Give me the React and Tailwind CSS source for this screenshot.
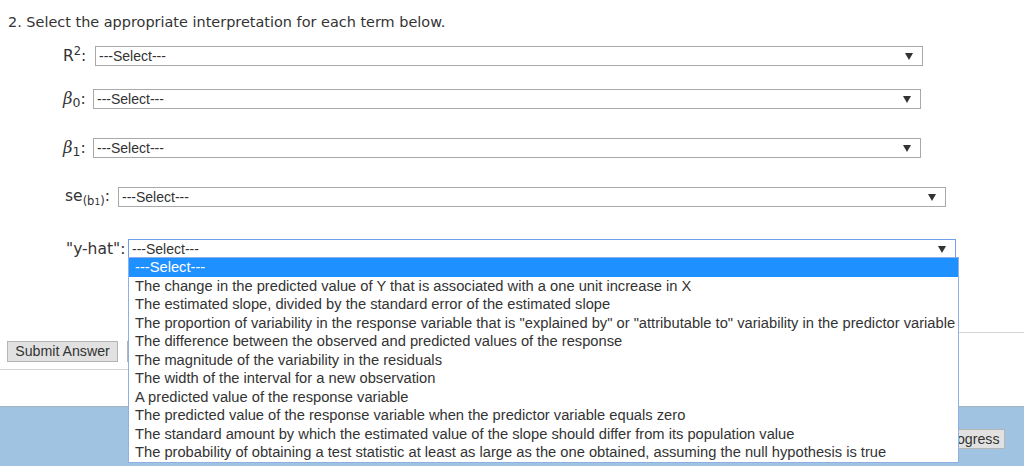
import React from "react";

function Arrow() {
  return (
    <svg width="8" height="7" viewBox="0 0 8 7" className="absolute right-[9px] top-[6px]">
      <path d="M0 0 L8 0 L4 7 Z" fill="#333" />
    </svg>
  );
}

function Select({ focused }) {
  return (
    <div
      className={
        "relative h-[20px] w-[828px] shrink-0 bg-white border font-['Liberation_Sans'] text-[14px] leading-[18px] pl-[3px] text-[#333] " +
        (focused ? "border-[#6f9fe6]" : "border-[#a9a9a9]")
      }
    >
      ---Select---
      <Arrow />
    </div>
  );
}

const options = [
  "The change in the predicted value of Y that is associated with a one unit increase in X",
  "The estimated slope, divided by the standard error of the estimated slope",
  'The proportion of variability in the response variable that is "explained by" or "attributable to" variability in the predictor variable',
  "The difference between the observed and predicted values of the response",
  "The magnitude of the variability in the residuals",
  "The width of the interval for a new observation",
  "A predicted value of the response variable",
  "The predicted value of the response variable when the predictor variable equals zero",
  "The standard amount by which the estimated value of the slope should differ from its population value",
  "The probability of obtaining a test statistic at least as large as the one obtained, assuming the null hypothesis is true",
];

function Beta({ sub }) {
  return (
    <span className="inline-flex items-baseline">
      <span className="font-['DejaVu_Serif'] italic text-[16.5px]">β</span>
      <span className="text-[12.5px] translate-y-[3px]">{sub}</span>
    </span>
  );
}

function Row({ mt, pl, lw, label, focused }) {
  return (
    <div className={`flex h-[20px] items-center text-[15.5px] leading-[20px] ${mt} ${pl}`}>
      <span className={`shrink-0 inline-flex items-baseline whitespace-nowrap ${lw}`}>{label}</span>
      <Select focused={focused} />
    </div>
  );
}

export default function App() {
  return (
    <div className="relative w-[1024px] h-[466px] overflow-hidden bg-white font-['DejaVu_Sans'] text-[#333]">
      <div className="h-[30px] pl-[8px] pt-[13px] text-[14.45px] leading-[18px]">
        2. Select the appropriate interpretation for each term below.
      </div>

      <Row
        mt="mt-[16px]"
        pl="pl-[63px]"
        lw="w-[32px]"
        label={
          <>
            R<span className="text-[11.5px] -translate-y-[6px]">2</span>:
          </>
        }
      />
      <Row
        mt="mt-[23px]"
        pl="pl-[63px]"
        lw="w-[30px]"
        label={
          <>
            <Beta sub="0" />:
          </>
        }
      />
      <Row
        mt="mt-[29px]"
        pl="pl-[63px]"
        lw="w-[30px]"
        label={
          <>
            <Beta sub="1" />:
          </>
        }
      />
      <Row
        mt="mt-[29px]"
        pl="pl-[65px]"
        lw="w-[53px]"
        label={
          <>
            se
            <span className="text-[11.5px] translate-y-[4px]">
              (b<span className="text-[9px]">1</span>)
            </span>
            :
          </>
        }
      />
      <Row mt="mt-[32px]" pl="pl-[66px]" lw="w-[62px]" label={<>"y-hat":</>} focused />

      <div className="mt-[73px] flex h-[74px]">
        <div className="w-[128px] shrink-0 pt-[9px]">
          <div className="flex h-[29px] items-start gap-[9px] pl-[7px] border-b border-[#d4d4d4] font-['Liberation_Sans'] text-[14.2px]">
            <button className="h-[21px] w-[111px] shrink-0 border border-[#b5b5b5] bg-[#e1e1e1] text-[#333] leading-[19px]">
              Submit Answer
            </button>
            <button className="h-[21px] w-[100px] shrink-0 border border-[#b5b5b5] bg-[#e1e1e1]" />
          </div>
        </div>
        <div className="flex-1 border-t border-[#d4d4d4]" />
      </div>

      <div className="h-[60px] border-t border-[#a6b4c0] bg-[#9fc3e1] flex justify-end pr-[19px] pt-[22px]">
        <button className="h-[20px] w-[104px] border border-[#b5b5b5] bg-[#e1e1e1] font-['Liberation_Sans'] text-[14.2px] text-[#333] leading-[18px]">
          Save Progress
        </button>
      </div>

      <div className="absolute left-[128px] top-[257px] w-[831px] border border-[#8fb0e3] bg-white font-['Liberation_Sans'] text-[14.7px] text-[#333]">
        <div className="h-[18.5px] leading-[18.5px] bg-[#1e90ff] text-white pl-[6px]">---Select---</div>
        {options.map((o) => (
          <div key={o} className="h-[18.5px] leading-[18.5px] pl-[6px] whitespace-nowrap">
            {o}
          </div>
        ))}
      </div>
    </div>
  );
}
